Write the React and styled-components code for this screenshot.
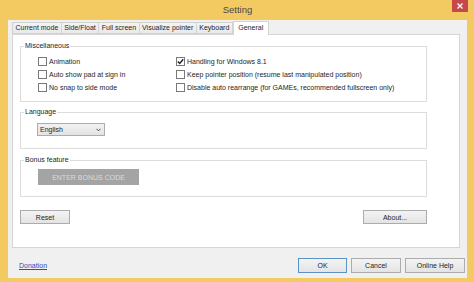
import React from 'react';
import styled, { createGlobalStyle } from 'styled-components';

const GlobalStyle = createGlobalStyle`
  html, body {
    margin: 0;
    padding: 0;
  }
  body {
    width: 474px;
    height: 282px;
    overflow: hidden;
    font-family: "Liberation Sans", Arial, sans-serif;
    font-size: 7px;
    color: #1e1e1e;
  }
`;

const Window = styled.div`
  width: 474px;
  height: 282px;
  box-sizing: border-box;
  background: #f3c961;
  display: flex;
  flex-direction: column;
  padding: 0 7px 4px 8px;
`;

const TitleBar = styled.div`
  height: 20px;
  flex: none;
  display: grid;
  grid-template-columns: 1fr auto 1fr;
  align-items: start;
`;

const Title = styled.div`
  grid-column: 2;
  font-size: 9.5px;
  line-height: 19px;
  color: #4a4a4a;
`;

const CloseButton = styled.div`
  grid-column: 3;
  justify-self: end;
  margin-right: -1px;
  width: 16px;
  height: 12px;
  background: #c7484b;
  display: flex;
  align-items: center;
  justify-content: center;
`;

const Client = styled.div`
  flex: 1;
  background: #f0f0f0;
  display: flex;
  flex-direction: column;
  padding: 1px 1px 0 4px;
`;

const TabStrip = styled.div`
  height: 14px;
  display: flex;
  align-items: flex-end;
  margin-bottom: -1px;
  padding-left: 1px;
  position: relative;
  z-index: 1;
`;

const Tab = styled.div`
  box-sizing: border-box;
  height: ${(p) => (p.active ? '14px' : '12px')};
  margin-bottom: ${(p) => (p.active ? '0' : '1px')};
  margin-left: ${(p) => (p.active ? '0' : '-1px')};
  padding: 0 ${(p) => (p.active ? '4.5px' : '2.5px')};
  border: 1px solid #d3d3d3;
  border-bottom: ${(p) => (p.active ? 'none' : '1px solid #d3d3d3')};
  background: ${(p) => (p.active ? '#fff' : 'linear-gradient(#f3f3f3, #e9e9e9)')};
  line-height: ${(p) => (p.active ? '12px' : '10px')};
  white-space: nowrap;
`;

const Panel = styled.div`
  height: 214px;
  box-sizing: border-box;
  margin-right: 6px;
  background: #fff;
  border: 1px solid #d6d6d6;
  display: flex;
  flex-direction: column;
  align-items: flex-start;
  padding: 6px 32px 0 7px;
`;

const Group = styled.fieldset`
  margin: ${(p) => p.gap || 0}px 0 0 0;
  width: 407px;
  box-sizing: border-box;
  border: 1px solid #dcdcdc;
  padding: ${(p) => p.pad};
  padding-left: 3px;
  min-width: 0;
`;

const Legend = styled.legend`
  padding: 0 1px;
  line-height: 10px;
  color: #1e1e1e;
`;

const Inner = styled.div`
  padding-left: 14px;
`;

const CheckGrid = styled.div`
  display: grid;
  grid-template-columns: 138px 1fr;
  grid-auto-flow: column;
  grid-template-rows: repeat(3, 13px);
`;

const CheckRow = styled.label`
  display: flex;
  align-items: center;
  gap: 2px;
  white-space: nowrap;
`;

const Box = styled.span`
  width: 9px;
  height: 9px;
  box-sizing: border-box;
  border: 1px solid #7a7a7a;
  background: #fff;
  display: flex;
  align-items: center;
  justify-content: center;
  flex: none;
`;

const Select = styled.div`
  width: 68px;
  height: 13px;
  box-sizing: border-box;
  border: 1px solid #acacac;
  background: linear-gradient(#f2f2f2, #e3e3e3);
  display: flex;
  align-items: center;
  justify-content: space-between;
  padding: 0 3px 0 2px;
  margin-left: -1px;
`;

const BonusButton = styled.div`
  width: 101px;
  height: 16px;
  background: #a4a4a4;
  color: #dadada;
  display: flex;
  align-items: center;
  justify-content: center;
  font-size: 7px;
`;

const ButtonRow = styled.div`
  margin-top: 13px;
  width: 407px;
  display: flex;
  justify-content: space-between;
`;

const Button = styled.div`
  width: ${(p) => p.w}px;
  height: ${(p) => p.h || 15}px;
  box-sizing: border-box;
  border: 1px solid ${(p) => (p.primary ? '#5b93c4' : '#acacac')};
  background: linear-gradient(#f3f3f3, #e4e4e4);
  display: flex;
  align-items: center;
  justify-content: center;
  color: #1e1e1e;
`;

const Footer = styled.div`
  flex: 1;
  display: flex;
  align-items: flex-start;
  padding: 10px 1px 0 7px;
`;

const Link = styled.a`
  color: #2a4cc8;
  text-decoration: underline;
  margin-top: 4px;
  margin-right: auto;
`;

const FooterButtons = styled.div`
  display: flex;
  gap: 4px;
`;

const Check = () => (
  <svg width="7" height="7" viewBox="0 0 7 7">
    <path d="M0.8 3.6 L2.7 5.5 L6.2 1.2" fill="none" stroke="#222" strokeWidth="1.4" />
  </svg>
);

const Option = ({ checked, children }) => (
  <CheckRow>
    <Box>{checked && <Check />}</Box>
    {children}
  </CheckRow>
);

const tabs = ['Current mode', 'Side/Float', 'Full screen', 'Visualize pointer', 'Keyboard', 'General'];

export default function App() {
  return (
    <>
      <GlobalStyle />
      <Window>
        <TitleBar>
          <Title>Setting</Title>
          <CloseButton>
            <svg width="6" height="6" viewBox="0 0 6 6">
              <path d="M0.5 0.5 L5.5 5.5 M5.5 0.5 L0.5 5.5" stroke="#fff" strokeWidth="1.3" />
            </svg>
          </CloseButton>
        </TitleBar>
        <Client>
          <TabStrip>
            {tabs.map((t) => (
              <Tab key={t} active={t === 'General'}>
                {t}
              </Tab>
            ))}
          </TabStrip>
          <Panel>
            <Group pad="4px 0 7px">
              <Legend>Miscellaneous</Legend>
              <Inner>
                <CheckGrid>
                  <Option>Animation</Option>
                  <Option>Auto show pad at sign in</Option>
                  <Option>No snap to side mode</Option>
                  <Option checked>Handling for Windows 8.1</Option>
                  <Option>Keep pointer position (resume last manipulated position)</Option>
                  <Option>Disable auto rearrange (for GAMEs, recommended fullscreen only)</Option>
                </CheckGrid>
              </Inner>
            </Group>
            <Group gap={5} pad="6px 0 12px">
              <Legend>Language</Legend>
              <Inner>
                <Select>
                  <span>English</span>
                  <svg width="5" height="4" viewBox="0 0 5 4">
                    <path d="M0.5 0.8 L2.5 2.8 L4.5 0.8" fill="none" stroke="#444" strokeWidth="1" />
                  </svg>
                </Select>
              </Inner>
            </Group>
            <Group gap={6} pad="4px 0 11px">
              <Legend>Bonus feature</Legend>
              <Inner>
                <BonusButton>ENTER BONUS CODE</BonusButton>
              </Inner>
            </Group>
            <ButtonRow>
              <Button w={50} h={14}>Reset</Button>
              <Button w={64} h={14}>About...</Button>
            </ButtonRow>
          </Panel>
          <Footer>
            <Link href="#">Donation</Link>
            <FooterButtons>
              <Button w={49} primary>OK</Button>
              <Button w={50}>Cancel</Button>
              <Button w={60}>Online Help</Button>
            </FooterButtons>
          </Footer>
        </Client>
      </Window>
    </>
  );
}
